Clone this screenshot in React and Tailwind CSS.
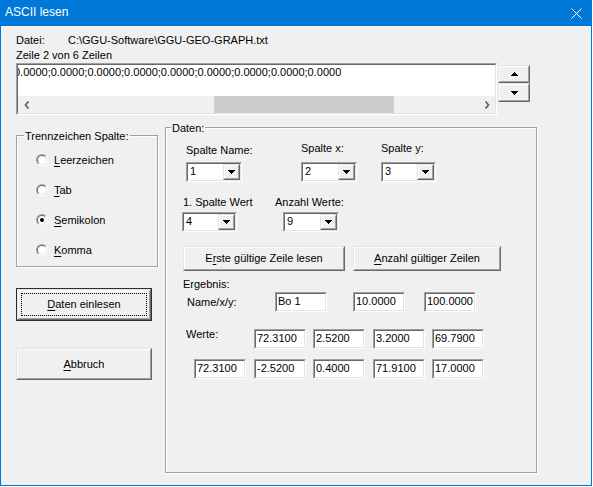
import React from 'react';

const Sunken = ({ className = '', inner = '', children }) => (
  <div className={`border border-t-[#a0a0a0] border-l-[#a0a0a0] border-r-white border-b-white ${className}`}>
    <div className={`h-full w-full border border-t-[#696969] border-l-[#696969] border-r-[#e3e3e3] border-b-[#e3e3e3] bg-white ${inner}`}>
      {children}
    </div>
  </div>
);

const Raised = ({ className = '', inner = '', children }) => (
  <div className={`border border-t-[#e3e3e3] border-l-[#e3e3e3] border-r-[#696969] border-b-[#696969] bg-[#f0f0f0] ${className}`}>
    <div className={`h-full w-full border border-t-white border-l-white border-r-[#a0a0a0] border-b-[#a0a0a0] flex items-center justify-center ${inner}`}>
      {children}
    </div>
  </div>
);

const Tri = ({ up }) => (
  <svg width="7" height="4" viewBox="0 0 7 4" shapeRendering="crispEdges">
    <path d={up ? 'M0 4h7L3.5 0z' : 'M0 0h7L3.5 4z'} fill="#000" />
  </svg>
);

const Chevron = ({ right }) => (
  <svg width="6" height="8" viewBox="0 0 6 8">
    <path d={right ? 'M1.5 0.5L4.5 4l-3 3.5' : 'M4.5 0.5L1.5 4l3 3.5'} stroke="#606060" strokeWidth="1.7" fill="none" />
  </svg>
);

const Combo = ({ value, w = 'w-[56px]', className = '' }) => (
  <Sunken className={`${w} h-[20px] ${className}`} inner="flex">
    <span className="flex-1 pl-[2px] leading-[15px]">{value}</span>
    <Raised className="w-[17px] h-full">
      <Tri />
    </Raised>
  </Sunken>
);

const Field = ({ value, className = '' }) => (
  <Sunken className={`w-[52px] h-[20px] ${className}`} inner="pl-[1px] leading-[14px] whitespace-nowrap overflow-hidden">
    {value}
  </Sunken>
);

const Radio = ({ checked, k, rest }) => (
  <div className="flex items-center h-[30px]">
    <div className="w-[12px] h-[12px] rounded-full border border-t-[#a0a0a0] border-l-[#a0a0a0] border-r-white border-b-white">
      <div className="w-full h-full rounded-full border border-t-[#696969] border-l-[#696969] border-r-[#e3e3e3] border-b-[#e3e3e3] bg-white flex items-center justify-center">
        {checked && <div className="w-[4px] h-[4px] rounded-full bg-black" />}
      </div>
    </div>
    <span className="ml-[6px]">
      <span className="underline underline-offset-[2px]">{k}</span>
      {rest}
    </span>
  </div>
);

const GroupBox = ({ label, className = '', labelPos = '', children }) => (
  <div className={`relative border border-[#a0a0a0] shadow-[inset_1px_1px_0_#fff,1px_1px_0_#fff] ${className}`}>
    <span className={`absolute top-[-6px] bg-[#f0f0f0] px-[1px] leading-[13px] ${labelPos}`}>{label}</span>
    {children}
  </div>
);

export default function App() {
  return (
    <div className="w-[593px] h-[487px] bg-white font-['Liberation_Sans',Arial,sans-serif] text-[11px] leading-[13px] text-black">
      <div className="w-[592px] h-[486px] flex flex-col bg-[#f0f0f0] border-x border-b border-[#0078d7]">
        {/* title bar */}
        <div className="h-[26px] shrink-0 bg-[#0078d7] flex items-center justify-between pl-[4px] pr-[9px] text-white text-[12px]">
          <span className="pb-[1px]">ASCII lesen</span>
          <svg width="11" height="11" viewBox="0 0 11 11">
            <path d="M0.5 0.5l10 10M10.5 0.5l-10 10" stroke="#fff" strokeWidth="1" />
          </svg>
        </div>

        <div className="pl-[15px] pt-[7px]">
          <div className="flex leading-[15px] h-[15px]">
            <span className="w-[52px]">Datei:</span>
            <span>C:\GGU-Software\GGU-GEO-GRAPH.txt</span>
          </div>
          <div className="leading-[15px] h-[15px]">Zeile 2 von 6 Zeilen</div>

          {/* line preview + spin */}
          <div className="flex items-start">
            <Sunken className="w-[481px] h-[52px]" inner="flex flex-col">
              <div className="flex-1 overflow-hidden whitespace-nowrap pt-[1px]">
                <span className="ml-[-4px] inline-block">
                  0.0000;0.0000;0.0000;0.0000;0.0000;0.0000;0.0000;0.0000;0.0000
                </span>
              </div>
              <div className="h-[17px] flex bg-[#f0f0f0]">
                <div className="w-[17px] flex items-center justify-center">
                  <Chevron />
                </div>
                <div className="flex-1">
                  <div className="ml-[179px] w-[180px] h-full bg-[#cdcdcd]" />
                </div>
                <div className="w-[17px] flex items-center justify-center">
                  <Chevron right />
                </div>
              </div>
            </Sunken>
            <div className="ml-[1px] mt-[2px] flex flex-col w-[32px]">
              <Raised className="h-[18px]">
                <Tri up />
              </Raised>
              <Raised className="h-[19px]">
                <Tri />
              </Raised>
            </div>
          </div>

          <div className="flex items-start">
            {/* left column */}
            <div className="w-[142px] mt-[20px] flex flex-col">
              <GroupBox label="Trennzeichen Spalte:" labelPos="left-[7px]" className="h-[132px]">
                <div className="pt-[9px] pl-[19px]">
                  <Radio k="L" rest="eerzeichen" />
                  <Radio k="T" rest="ab" />
                  <Radio k="S" rest="emikolon" checked />
                  <Radio k="K" rest="omma" />
                </div>
              </GroupBox>

              <div className="mt-[21px] w-[136px] h-[33px] border border-[#303030]">
                <Raised className="w-full h-full" inner="p-[2px]">
                  <div className="w-full h-full border border-dotted border-black flex items-center justify-center">
                    <span>
                      <span className="underline underline-offset-[2px]">D</span>aten einlesen
                    </span>
                  </div>
                </Raised>
              </div>

              <Raised className="mt-[27px] w-[136px] h-[32px]">
                <span>
                  <span className="underline underline-offset-[2px]">A</span>bbruch
                </span>
              </Raised>
            </div>

            {/* Daten group */}
            <GroupBox label="Daten:" labelPos="left-[5px]" className="ml-[7px] mt-[12px] w-[372px] h-[346px]">
              <div className="flex flex-col">
                <div className="flex mt-[14px]">
                  <div className="ml-[20px] w-[115px] flex flex-col">
                    <span className="mt-[2px]">Spalte Name:</span>
                    <Combo value="1" className="mt-[5px]" />
                  </div>
                  <div className="w-[80px] flex flex-col">
                    <span>Spalte x:</span>
                    <Combo value="2" className="mt-[7px]" />
                  </div>
                  <div className="flex flex-col">
                    <span>Spalte y:</span>
                    <Combo value="3" w="w-[55px]" className="mt-[7px]" />
                  </div>
                </div>

                <div className="flex mt-[14px]">
                  <div className="ml-[16px] w-[93px] flex flex-col">
                    <span className="ml-[1px]">1. Spalte Wert</span>
                    <Combo value="4" w="w-[55px]" className="mt-[3px]" />
                  </div>
                  <div className="flex flex-col">
                    <span>Anzahl Werte:</span>
                    <Combo value="9" className="mt-[3px] ml-[8px]" />
                  </div>
                </div>

                <div className="flex mt-[14px]">
                  <Raised className="ml-[17px] w-[162px] h-[25px]">
                    <span>
                      E<span className="underline underline-offset-[2px]">r</span>ste gültige Zeile lesen
                    </span>
                  </Raised>
                  <Raised className="ml-[8px] w-[148px] h-[25px]">
                    <span>
                      <span className="underline underline-offset-[2px]">A</span>nzahl gültiger Zeilen
                    </span>
                  </Raised>
                </div>

                <span className="mt-[7px] ml-[17px]">Ergebnis:</span>

                <div className="flex items-center mt-[1px] h-[20px]">
                  <span className="ml-[21px] w-[88px]">Name/x/y:</span>
                  <Field value="Bo 1" />
                  <Field value="10.0000" className="ml-[26px]" />
                  <Field value="100.0000" className="ml-[19px]" />
                </div>

                <div className="flex items-start mt-[17px]">
                  <span className="ml-[20px] w-[68px] mt-[-1px]">Werte:</span>
                  <Field value="72.3100" />
                  <Field value="2.5200" className="ml-[7px]" />
                  <Field value="3.2000" className="ml-[8px]" />
                  <Field value="69.7900" className="ml-[7px]" />
                </div>

                <div className="flex mt-[10px]">
                  <Field value="72.3100" className="ml-[28px]" />
                  <Field value="-2.5200" className="ml-[8px]" />
                  <Field value="0.4000" className="ml-[7px]" />
                  <Field value="71.9100" className="ml-[8px]" />
                  <Field value="17.0000" className="ml-[7px]" />
                </div>
              </div>
            </GroupBox>
          </div>
        </div>
      </div>
    </div>
  );
}
